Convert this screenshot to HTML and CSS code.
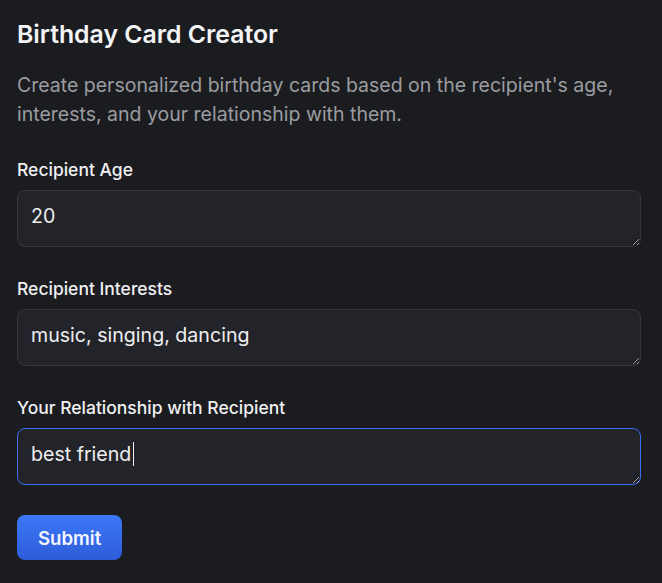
FILE: index.html
```html
<!DOCTYPE html>
<html lang="en">
<head>
<meta charset="utf-8">
<title>Birthday Card Creator</title>
<link rel="stylesheet" href="styles.css">
</head>
<body>
<main class="page">
  <h1 class="title">Birthday Card Creator</h1>
  <p class="desc">Create personalized birthday cards based on the recipient's age, interests, and your relationship with them.</p>
  <div class="field">
    <label class="label" for="age">Recipient Age</label>
    <textarea id="age" class="input" rows="1">20</textarea>
  </div>
  <div class="field">
    <label class="label" for="interests">Recipient Interests</label>
    <textarea id="interests" class="input" rows="1">music, singing, dancing</textarea>
  </div>
  <div class="field">
    <label class="label" for="rel">Your Relationship with Recipient</label>
    <div class="input-wrap">
      <textarea id="rel" class="input input-focus" rows="1">best friend</textarea>
      <span class="caret"></span>
    </div>
  </div>
  <div class="actions">
    <button class="btn" type="button">Submit</button>
  </div>
</main>
</body>
</html>
```
FILE: styles.css
```css
html, body {
  margin: 0;
  padding: 0;
  background: #1b1c20;
  color-scheme: dark;
}
body {
  font-family: Inter, "Noto Sans", sans-serif;
  color: #f0f0f2;
}
.page {
  padding: 19px 21px 0 17px;
  display: flex;
  flex-direction: column;
}
.title {
  margin: 0;
  font-size: 24.8px;
  line-height: 30px;
  font-weight: 600;
  color: #f3f4f6;
}
.desc {
  margin: 22px 0 0;
  font-size: 19.5px;
  line-height: 29px;
  color: #9b9ca1;
}
.field {
  display: flex;
  flex-direction: column;
  gap: 8px;
  margin-top: 29px;
}
.field + .field {
  margin-top: 30px;
}
.label {
  font-size: 17.5px;
  line-height: 24px;
  font-weight: 500;
  color: #f0f0f2;
}
.input-wrap {
  position: relative;
  display: flex;
}
.input {
  box-sizing: border-box;
  width: 100%;
  height: 57px;
  margin: 0;
  padding: 12px 13px 16px;
  font-family: Inter, "Noto Sans", sans-serif;
  font-size: 19.6px;
  line-height: 27px;
  color: #eeeef0;
  background: #232429;
  border: 1px solid #35363c;
  border-radius: 8px;
  outline: none;
  resize: vertical;
  overflow: hidden;
}
.input-focus {
  border-color: #3a6ff0;
}
.caret {
  position: absolute;
  left: 116px;
  top: 14px;
  width: 1px;
  height: 24px;
  background: #f0f0f2;
}
.actions {
  margin-top: 30px;
  display: flex;
}
.btn {
  height: 45px;
  padding: 0 21px;
  border: none;
  border-radius: 8px;
  background: linear-gradient(180deg, #3c78f8 0%, #2f5cd8 100%);
  color: #f3f5ff;
  font-family: Inter, "Noto Sans", sans-serif;
  font-size: 18.6px;
  font-weight: 600;
}
```
